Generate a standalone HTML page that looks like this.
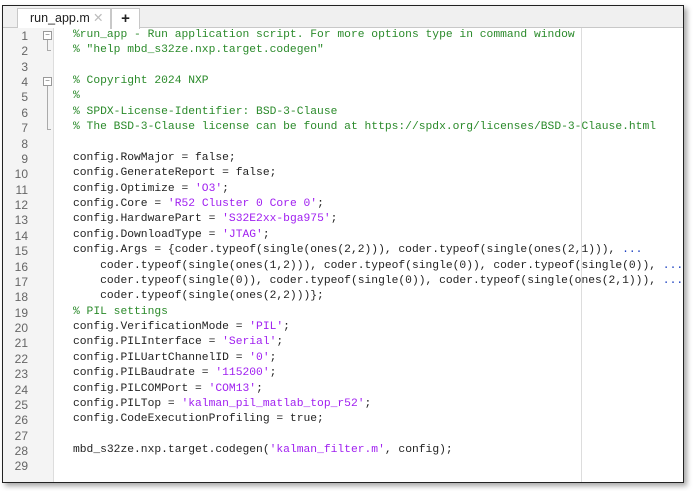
<!DOCTYPE html>
<html><head><style>
body{margin:0;width:693px;height:491px;background:#fff;position:relative;overflow:hidden;font-family:"Liberation Mono",monospace;}
.frame{position:absolute;left:2px;top:5px;width:680px;height:476px;border:1px solid #222;box-shadow:3px 3px 5px rgba(0,0,0,.35);background:#fff;overflow:hidden}
.tabbar{position:absolute;left:0;top:0;width:100%;height:21px;background:#f0f0f0;border-bottom:1px solid #c8c8c8}
.tab{position:absolute;top:2px;height:20px;background:#fff;border:1px solid #c8c8c8;border-bottom:none;font-family:"Liberation Sans",sans-serif;font-size:12.5px;color:#222;line-height:19px}
.gutter{position:absolute;left:0;top:22px;width:50px;bottom:0;background:#f4f4f4;border-right:1px solid #ddd}
.edge{position:absolute;left:578px;top:22px;bottom:0;width:1px;background:#ddd}
.ln{position:absolute;left:0;width:25px;text-align:right;font-size:12px;color:#666;font-family:"Liberation Sans",sans-serif}
.code{position:absolute;left:70px;font-size:11.3px;white-space:pre;color:#222}
.c{color:#2a8a2a}.s{color:#a020f0}.d{color:#1a3fc0}
.fb{position:absolute;left:40px;width:7px;height:7px;border:1px solid #999;background:#fff;font-size:8px;line-height:6px;text-align:center;color:#666;font-family:"Liberation Sans"}
.fl{position:absolute;left:44px;width:1px;background:#aaa}
</style></head><body>
<div class="frame">
<div class="tabbar">
<div class="tab" style="left:14px;width:92px"><span style="position:absolute;left:12px">run_app.m</span><span style="position:absolute;left:75px;color:#bbb">✕</span></div>
<div class="tab" style="left:108px;width:27px;text-align:center;font-weight:bold;font-size:15px">+</div>
</div>
<div class="gutter"></div>
<div class="edge"></div>
<div class="fb" style="top:25px">−</div><div class="fl" style="top:34px;height:10px"></div><div class="fl" style="top:44px;left:44px;width:4px;height:1px"></div>
<div class="fb" style="top:71px">−</div><div class="fl" style="top:80px;height:43px"></div><div class="fl" style="top:123px;left:44px;width:4px;height:1px"></div>
<div id="L"></div>
</div>
<script>
var lines=[
'<span class="c">%run_app - Run application script. For more options type in command window</span>',
'<span class="c">% "help mbd_s32ze.nxp.target.codegen"</span>',
'',
'<span class="c">% Copyright 2024 NXP</span>',
'<span class="c">%</span>',
'<span class="c">% SPDX-License-Identifier: BSD-3-Clause</span>',
'<span class="c">% The BSD-3-Clause license can be found at https://spdx.org/licenses/BSD-3-Clause.html</span>',
'',
'config.RowMajor = false;',
'config.GenerateReport = false;',
'config.Optimize = <span class="s">\'O3\'</span>;',
'config.Core = <span class="s">\'R52 Cluster 0 Core 0\'</span>;',
'config.HardwarePart = <span class="s">\'S32E2xx-bga975\'</span>;',
'config.DownloadType = <span class="s">\'JTAG\'</span>;',
'config.Args = {coder.typeof(single(ones(2,2))), coder.typeof(single(ones(2,1))), <span class="d">...</span>',
'    coder.typeof(single(ones(1,2))), coder.typeof(single(0)), coder.typeof(single(0)), <span class="d">...</span>',
'    coder.typeof(single(0)), coder.typeof(single(0)), coder.typeof(single(ones(2,1))), <span class="d">...</span>',
'    coder.typeof(single(ones(2,2)))};',
'<span class="c">% PIL settings</span>',
'config.VerificationMode = <span class="s">\'PIL\'</span>;',
'config.PILInterface = <span class="s">\'Serial\'</span>;',
'config.PILUartChannelID = <span class="s">\'0\'</span>;',
'config.PILBaudrate = <span class="s">\'115200\'</span>;',
'config.PILCOMPort = <span class="s">\'COM13\'</span>;',
'config.PILTop = <span class="s">\'kalman_pil_matlab_top_r52\'</span>;',
'config.CodeExecutionProfiling = true;',
'',
'mbd_s32ze.nxp.target.codegen(<span class="s">\'kalman_filter.m\'</span>, config);',
''];
var h='';
for(var i=0;i<lines.length;i++){var t=23+i*15.37;
h+='<div class="ln" style="top:'+t+'px">'+(i+1)+'</div><div class="code" style="top:'+t+'px">'+lines[i]+'</div>';}
document.getElementById('L').innerHTML=h;
</script>
</body></html>
